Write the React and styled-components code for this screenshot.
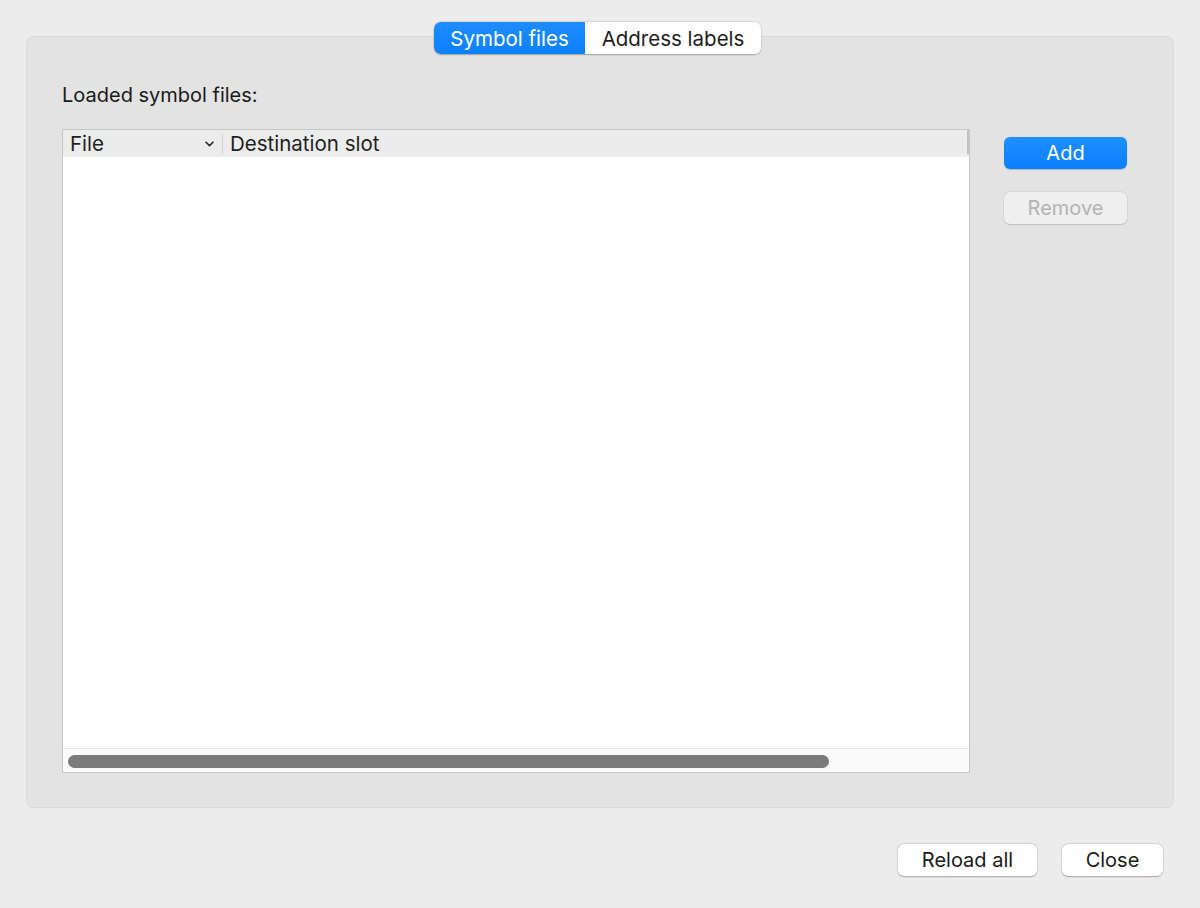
import React from "react";
import styled, { createGlobalStyle } from "styled-components";

const Global = createGlobalStyle`
  html, body { margin: 0; padding: 0; background: #ececec; }
  body { font-family: Inter, "Liberation Sans", Arial, sans-serif; color: #1d1d1d; }
  * { box-sizing: border-box; }
`;

const Window = styled.div`
  width: 1200px;
  height: 908px;
  background: #ececec;
  padding: 22px 26px 0 26px;
  display: flex;
  flex-direction: column;
`;

const TabsRow = styled.div`
  display: flex;
  justify-content: center;
  padding-right: 5px;
  position: relative;
  z-index: 1;
`;

const Segmented = styled.div`
  display: flex;
  height: 32px;
  border-radius: 7px;
  background: #fff;
  box-shadow: 0 0.5px 1.5px rgba(0, 0, 0, 0.28), 0 0 0 0.5px rgba(0, 0, 0, 0.08);
  overflow: hidden;
`;

const Segment = styled.div`
  width: ${(p) => p.$w}px;
  display: flex;
  align-items: center;
  justify-content: center;
  font-size: 20.5px;
  background: ${(p) => (p.$active ? "linear-gradient(#1f8dff, #0a80ff)" : "#fff")};
  color: ${(p) => (p.$active ? "#fff" : "#1d1d1d")};
`;

const Panel = styled.div`
  margin-top: -18px;
  height: 772px;
  background: #e3e3e3;
  border: 1px solid #dadada;
  border-radius: 8px;
  padding: 46px 46px 0 35px;
  display: flex;
  flex-direction: column;
`;

const Label = styled.div`
  font-size: 20px;
  line-height: 24px;
  height: 24px;
  color: #1a1a1a;
`;

const Content = styled.div`
  margin-top: 22px;
  display: grid;
  grid-template-columns: 908px 123px;
  column-gap: 34px;
  align-items: start;
`;

const Table = styled.div`
  height: 644px;
  border: 1px solid #c6c6c6;
  background: #fff;
  display: flex;
  flex-direction: column;
`;

const Header = styled.div`
  height: 27px;
  background: #ececec;
  display: flex;
  align-items: center;
  font-size: 20.5px;
  color: #1f1f1f;
`;

const HeaderCell = styled.div`
  width: ${(p) => (p.$w ? `${p.$w}px` : "auto")};
  flex: ${(p) => (p.$w ? "none" : "1")};
  display: flex;
  align-items: center;
  padding-left: 7px;
  padding-right: 8px;
  justify-content: space-between;
  border-right: ${(p) => (p.$divider ? "1px solid #d2d2d2" : "none")};
  height: ${(p) => (p.$divider ? "20px" : "100%")};
`;

const EndDivider = styled.div`
  width: 2px;
  height: 24px;
  align-self: flex-start;
  background: #c4c4c4;
`;

const Body = styled.div`
  flex: 1;
  background: #fff;
`;

const ScrollArea = styled.div`
  height: 24px;
  border-top: 1px solid #e6e6e6;
  background: #fafafa;
  padding: 6px 0 0 5px;
`;

const Thumb = styled.div`
  width: 761px;
  height: 13px;
  border-radius: 7px;
  background: #7b7b7b;
`;

const SideButtons = styled.div`
  padding-top: 8px;
  display: flex;
  flex-direction: column;
  gap: 23px;
`;

const SideButton = styled.div`
  height: 32px;
  border-radius: 6px;
  display: flex;
  align-items: center;
  justify-content: center;
  font-size: 20px;
  background: ${(p) => (p.$primary ? "linear-gradient(#1f8eff, #0a7fff)" : "#efefef")};
  color: ${(p) => (p.$primary ? "#fff" : "#b3b3b3")};
  box-shadow: ${(p) =>
    p.$primary
      ? "0 0.5px 1px rgba(0,0,0,0.2)"
      : "0 0 0 0.5px rgba(0,0,0,0.08), 0 0.5px 1px rgba(0,0,0,0.12)"};
`;

const Footer = styled.div`
  display: flex;
  justify-content: flex-end;
  gap: 25px;
  padding: 36px 11px 0 0;
`;

const FooterButton = styled.div`
  width: ${(p) => p.$w}px;
  height: 32px;
  border-radius: 6px;
  background: #fff;
  display: flex;
  align-items: center;
  justify-content: center;
  font-size: 20px;
  color: #1a1a1a;
  box-shadow: 0 0.5px 1.5px rgba(0, 0, 0, 0.28), 0 0 0 0.5px rgba(0, 0, 0, 0.08);
`;

const Chevron = () => (
  <svg width="9" height="6" viewBox="0 0 9 6">
    <path d="M1 1.2 L4.5 4.6 L8 1.2" fill="none" stroke="#2a2a2a" strokeWidth="1.6" strokeLinecap="round" strokeLinejoin="round" />
  </svg>
);

export default function App() {
  return (
    <>
      <Global />
      <Window>
        <TabsRow>
          <Segmented>
            <Segment $active $w={151}>Symbol files</Segment>
            <Segment $w={176}>Address labels</Segment>
          </Segmented>
        </TabsRow>
        <Panel>
          <Label>Loaded symbol files:</Label>
          <Content>
            <Table>
              <Header>
                <HeaderCell $w={160} $divider>
                  <span>File</span>
                  <Chevron />
                </HeaderCell>
                <HeaderCell>Destination slot</HeaderCell>
                <EndDivider />
              </Header>
              <Body />
              <ScrollArea>
                <Thumb />
              </ScrollArea>
            </Table>
            <SideButtons>
              <SideButton $primary>Add</SideButton>
              <SideButton>Remove</SideButton>
            </SideButtons>
          </Content>
        </Panel>
        <Footer>
          <FooterButton $w={139}>Reload all</FooterButton>
          <FooterButton $w={101}>Close</FooterButton>
        </Footer>
      </Window>
    </>
  );
}
